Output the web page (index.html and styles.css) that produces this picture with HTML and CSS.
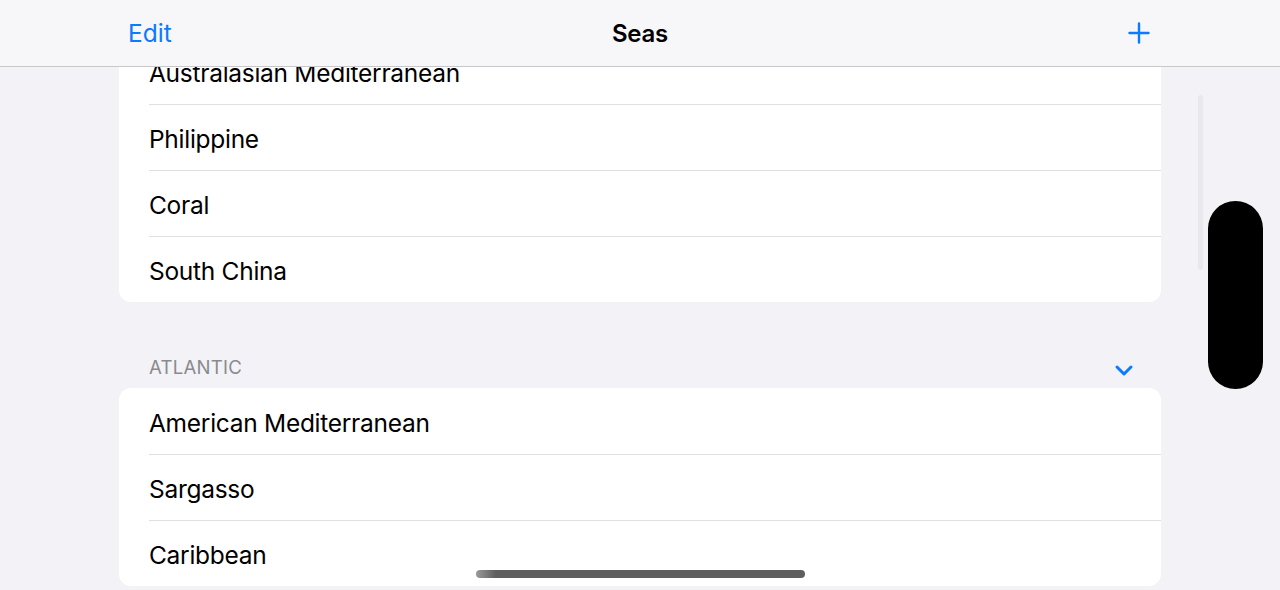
FILE: index.html
```html
<!DOCTYPE html>
<html lang="en">
<head>
<meta charset="utf-8">
<title>Seas</title>
<link rel="stylesheet" href="styles.css">
</head>
<body>
<div class="screen">
  <main class="content">
    <section class="group first">
      <ul class="card">
        <li class="row">Australasian Mediterranean</li>
        <li class="row">Philippine</li>
        <li class="row">Coral</li>
        <li class="row">South China</li>
      </ul>
    </section>
    <section class="group">
      <header class="section-header">
        <span class="section-title">Atlantic</span>
        <svg class="chevron" width="20" height="13" viewBox="0 0 20 13"><path d="M3 3 L10 10 L17 3" fill="none" stroke="#0a7aff" stroke-width="3" stroke-linecap="round" stroke-linejoin="round"/></svg>
      </header>
      <ul class="card">
        <li class="row">American Mediterranean</li>
        <li class="row">Sargasso</li>
        <li class="row">Caribbean</li>
      </ul>
    </section>
  </main>

  <nav class="navbar">
    <span class="nav-edit">Edit</span>
    <span class="nav-title">Seas</span>
    <svg class="nav-plus" width="22" height="22" viewBox="0 0 22 22"><path d="M11 1.5 V20.5 M1.5 11 H20.5" fill="none" stroke="#0a7aff" stroke-width="2.4" stroke-linecap="round"/></svg>
  </nav>

  <div class="scroll-track"></div>
  <div class="side-pill"></div>
  <div class="home-indicator"></div>
</div>
</body>
</html>
```
FILE: styles.css
```css
* { box-sizing: border-box; }
html, body {
  margin: 0;
  padding: 0;
  background: #f2f2f7;
}
body {
  font-family: Inter, "Noto Sans", "Liberation Sans", sans-serif;
  color: #000;
  -webkit-font-smoothing: antialiased;
}
.screen {
  position: relative;
  width: 1280px;
  height: 590px;
  overflow: hidden;
}
.content {
  padding: 38px 119px 0 119px;
}
.card {
  list-style: none;
  margin: 0;
  padding: 0;
  background: #fff;
  border-radius: 12px;
  overflow: hidden;
}
.row {
  position: relative;
  height: 66px;
  display: flex;
  align-items: center;
  padding-left: 30px;
  padding-top: 3px;
  font-size: 24.5px;
  letter-spacing: -0.28px;
}
.row + .row::before {
  content: "";
  position: absolute;
  left: 30px;
  right: 0;
  top: 0;
  height: 1px;
  background: #e0e0e3;
}
.section-header {
  display: flex;
  align-items: flex-end;
  justify-content: space-between;
  height: 86px;
  padding: 0 27px 11px 30px;
}
.section-title {
  text-transform: uppercase;
  font-size: 18.6px;
  color: #8a8a8e;
  letter-spacing: 0.25px;
  line-height: 1;
}
.chevron {
  display: block;
  margin-bottom: 0;
}
.navbar {
  position: absolute;
  left: 0;
  top: 0;
  width: 1280px;
  height: 67px;
  background: #f7f7f9;
  border-bottom: 1px solid #c8c8cb;
  display: flex;
  align-items: center;
  justify-content: space-between;
  padding: 0 130px 0 128px;
}
.nav-edit {
  color: #0a7aff;
  font-size: 24.5px;
  width: 120px;
}
.nav-title {
  font-size: 24px;
  font-weight: 600;
  letter-spacing: -0.2px;
  margin-left: 2px;
}
.nav-plus {
  display: block;
  margin-left: 98px;
}
.scroll-track {
  position: absolute;
  left: 1198px;
  top: 95px;
  width: 5px;
  height: 175px;
  border-radius: 3px;
  background: #e8e8ed;
}
.side-pill {
  position: absolute;
  left: 1208px;
  top: 201px;
  width: 55px;
  height: 188px;
  border-radius: 28px;
  background: #000;
}
.home-indicator {
  position: absolute;
  left: 476px;
  top: 570px;
  width: 329px;
  height: 8px;
  border-radius: 4px;
  background: linear-gradient(90deg, #9a9a9a 0%, #5e5e5e 6%, #5e5e5e 100%);
}
```
